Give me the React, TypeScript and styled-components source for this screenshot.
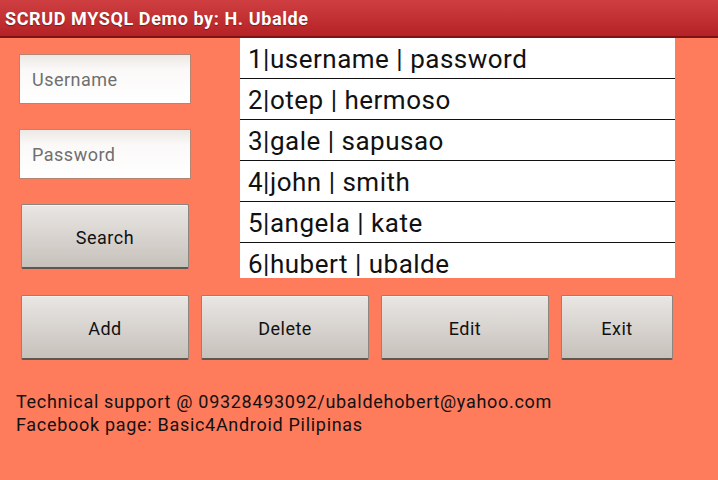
import React from "react";
import styled, { createGlobalStyle } from "styled-components";

const GlobalStyle = createGlobalStyle`
  html, body {
    margin: 0;
    padding: 0;
    background: #fe7b5c;
    font-family: Roboto, "Liberation Sans", sans-serif;
  }
`;

const Screen = styled.div`
  width: 718px;
  height: 480px;
  background: #fe7b5c;
  display: flex;
  flex-direction: column;
  overflow: hidden;
`;

const TitleBar = styled.div`
  height: 36px;
  border-bottom: 2px solid #7e1214;
  background: linear-gradient(#cf3f41, #b52226);
  display: flex;
  align-items: center;
  padding-left: 5px;
  color: #fff;
  font-weight: bold;
  font-size: 18px;
  letter-spacing: 0.6px;
  text-shadow: 0 1px 1px rgba(0, 0, 0, 0.35);
`;

const TopSection = styled.div`
  display: flex;
`;

const FormColumn = styled.div`
  width: 221px;
  padding: 16px 0 0 19px;
  display: flex;
  flex-direction: column;
`;

const Field = styled.div`
  width: 172px;
  height: 50px;
  box-sizing: border-box;
  border: 1px solid #b58472;
  background: linear-gradient(#ebe7e4 0%, #fbf9f8 30%, #fff 100%);
  display: flex;
  align-items: center;
  padding-left: 12px;
  color: #6f6f6f;
  font-size: 18px;
  letter-spacing: 0.5px;
  margin-bottom: 25px;
`;

const Button = styled.button<{ $w?: number }>`
  width: ${(p) => p.$w ?? 168}px;
  height: 65px;
  box-sizing: border-box;
  border: 1px solid #8c847e;
  border-bottom: 2px solid #5e5650;
  border-radius: 2px;
  background: linear-gradient(#e9e6e3, #c7c1bb);
  box-shadow: inset 0 1px 0 #f4f2f0;
  font-family: Roboto, "Liberation Sans", sans-serif;
  font-size: 18px;
  letter-spacing: 0.5px;
  color: #111;
  padding: 2px 0 0;
`;

const SearchButton = styled(Button)`
  margin-left: 2px;
`;

const List = styled.div`
  width: 435px;
  height: 240px;
  background: #fff;
  overflow: hidden;
`;

const Row = styled.div`
  height: 40px;
  border-bottom: 1px solid #111;
  display: flex;
  align-items: center;
  padding: 1px 0 0 8px;
  box-sizing: border-box;
  height: 41px;
  font-size: 26px;
  letter-spacing: 0.5px;
  color: #111;
`;

const ButtonRow = styled.div`
  display: flex;
  gap: 12px;
  padding: 17px 0 0 21px;
`;

const Footer = styled.div`
  padding: 30px 0 0 16px;
  font-size: 18px;
  letter-spacing: 0.7px;
  line-height: 23px;
  color: #111;
`;

const rows = [
  "1|username | password",
  "2|otep | hermoso",
  "3|gale | sapusao",
  "4|john | smith",
  "5|angela | kate",
  "6|hubert | ubalde",
];

export default function App() {
  return (
    <Screen>
      <GlobalStyle />
      <TitleBar>SCRUD MYSQL Demo by: H. Ubalde</TitleBar>
      <TopSection>
        <FormColumn>
          <Field>Username</Field>
          <Field>Password</Field>
          <SearchButton>Search</SearchButton>
        </FormColumn>
        <List>
          {rows.map((r) => (
            <Row key={r}>{r}</Row>
          ))}
        </List>
      </TopSection>
      <ButtonRow>
        <Button>Add</Button>
        <Button>Delete</Button>
        <Button>Edit</Button>
        <Button $w={112}>Exit</Button>
      </ButtonRow>
      <Footer>
        Technical support @ 09328493092/ubaldehobert@yahoo.com
        <br />
        Facebook page: Basic4Android Pilipinas
      </Footer>
    </Screen>
  );
}
